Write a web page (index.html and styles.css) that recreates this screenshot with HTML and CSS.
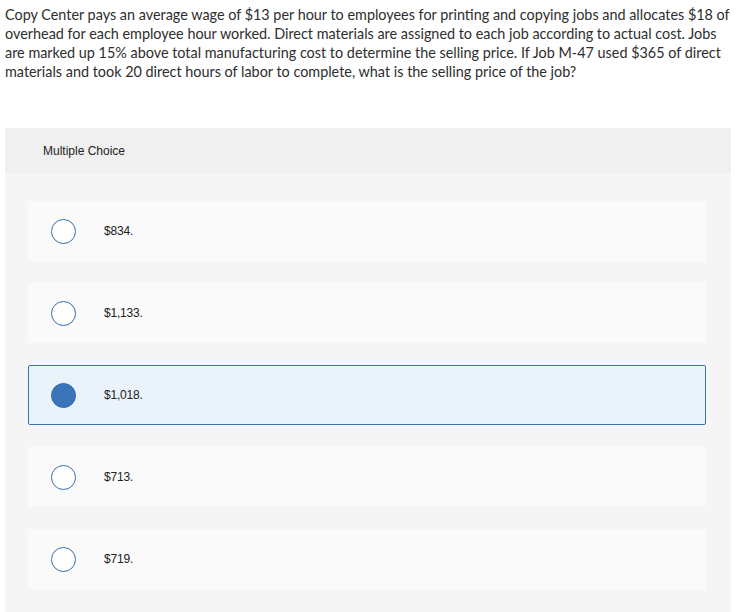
FILE: index.html
```html
<!DOCTYPE html>
<html>
<head>
<meta charset="utf-8">
<link rel="stylesheet" href="styles.css">
</head>
<body>
<div class="question">Copy Center pays an average wage of $13 per hour to employees for printing and copying jobs and allocates $18 of overhead for each employee hour worked. Direct materials are assigned to each job according to actual cost. Jobs are marked up 15% above total manufacturing cost to determine the selling price. If Job M-47 used $365 of direct materials and took 20 direct hours of labor to complete, what is the selling price of the job?</div>
<div class="panel">
  <div class="panel-head">Multiple Choice</div>
  <div class="options">
    <div class="option"><span class="radio"></span><span class="label">$834.</span></div>
    <div class="option"><span class="radio"></span><span class="label">$1,133.</span></div>
    <div class="option selected"><span class="radio"></span><span class="label">$1,018.</span></div>
    <div class="option"><span class="radio"></span><span class="label">$713.</span></div>
    <div class="option"><span class="radio"></span><span class="label">$719.</span></div>
  </div>
</div>
</body>
</html>
```
FILE: styles.css
```css
html, body {
  margin: 0;
  padding: 0;
  background: #ffffff;
}
body {
  width: 742px;
  height: 612px;
  overflow: hidden;
}
.question {
  font-family: Lato, "Open Sans", sans-serif;
  font-size: 14.4px;
  line-height: 19px;
  color: #2e2e2e;
  padding: 5px 6px 0 5px;
}
.panel {
  margin: 47px 11px 0 5px;
  background: #f5f5f5;
  height: 500px;
}
.panel-head {
  height: 45px;
  background: #f0f0f0;
  display: flex;
  align-items: center;
  padding-left: 38px;
  font-family: "Liberation Sans", Arial, sans-serif;
  font-size: 12px;
  color: #222;
}
.options {
  display: flex;
  flex-direction: column;
  gap: 22px;
  padding: 28px 25px 0 23px;
}
.option {
  height: 60px;
  box-sizing: border-box;
  background: #fafafa;
  border-radius: 2px;
  display: flex;
  align-items: center;
  padding-left: 22px;
  border: 1px solid transparent;
}
.option.selected {
  background: #eaf2fb;
  border-color: #3b73b5;
}
.radio {
  width: 25px;
  height: 25px;
  box-sizing: border-box;
  border: 1.5px solid #3a6ea5;
  border-radius: 50%;
  background: #fff;
  flex: none;
}
.selected .radio {
  background: #3a75bb;
  border-color: #3168aa;
}
.label {
  margin-left: 28px;
  font-family: "Liberation Sans", Arial, sans-serif;
  font-size: 12px;
  letter-spacing: -0.2px;
  color: #222;
}
```
